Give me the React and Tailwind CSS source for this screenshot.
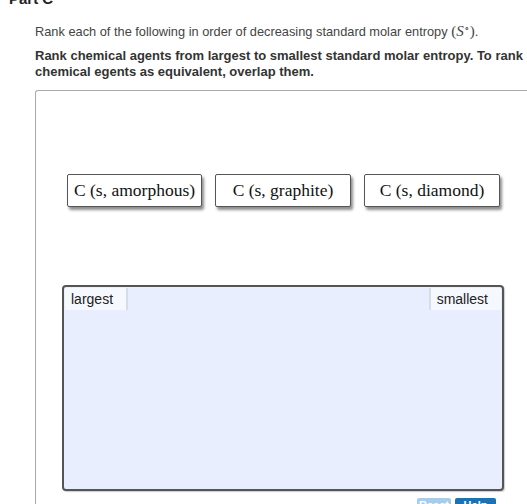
export default function App() {
  const chips = ['C (s, amorphous)', 'C (s, graphite)', 'C (s, diamond)'];

  return (
    <div className="relative h-[504px] w-[527px] overflow-hidden bg-white font-['Liberation_Sans',Arial,sans-serif] text-[#333]">
      {/* part heading, cut off at the top */}
      <h2 className="mt-[-9px] ml-[9px] text-[15px] font-bold leading-[16px] text-[#222]">Part C</h2>

      <div className="pl-[35px]">
        <p className="mt-[15px] whitespace-nowrap text-[12.8px] leading-[18px] text-[#444]">
          Rank each of the following in order of decreasing standard molar entropy{' '}
          <span className="font-['Liberation_Serif',serif] text-[15px]">
            (<i>S</i>
            <sup className="text-[9px]">∘</sup>)
          </span>
          .
        </p>
        <p className="mt-[7px] w-[500px] whitespace-nowrap text-[13px] font-bold leading-[16px] text-[#333]">
          Rank chemical agents from largest to smallest standard molar entropy. To rank
          <br />
          chemical egents as equivalent, overlap them.
        </p>

        {/* answer area */}
        <div className="mt-[10px] h-[430px] rounded-tl-[3px] border-t border-l border-[#a9a9a9] pl-[31px] pt-[83px]">
          <div className="flex gap-[13px]">
            {chips.map((c) => (
              <div
                key={c}
                className="flex h-[33px] w-[136px] items-center justify-center rounded-[2px] border border-[#555] bg-white font-['Liberation_Serif',serif] text-[17.5px] text-[#111] shadow-[2px_3px_3px_rgba(0,0,0,0.45)] first:w-[135px]"
              >
                {c}
              </div>
            ))}
          </div>

          <div className="mt-[78px] ml-[-5px] h-[206px] w-[442px] rounded-[4px] border-2 border-[#555] bg-[#e8eefd] p-[1px] shadow-[1px_1px_1px_rgba(0,0,0,0.2)]">
            <div className="flex justify-between text-[14px] leading-[22px] text-[#222]">
              <span className="border-r-2 border-[#d8dce4] bg-[#f6f8ff] pr-[13px] pl-[6px]">largest</span>
              <span className="border-l-2 border-[#d8dce4] bg-[#f6f8ff] pr-[13px] pl-[6px]">smallest</span>
            </div>
          </div>

          <div className="mt-[7px] ml-[350px] flex gap-[4px] text-[11px] font-bold leading-[14px] text-white">
            <div className="w-[34px] rounded-[2px] bg-[#a9cde9] text-center">Reset</div>
            <div className="w-[41px] rounded-[2px] bg-[#1d72b3] text-center">Help</div>
          </div>
        </div>
      </div>
    </div>
  );
}
